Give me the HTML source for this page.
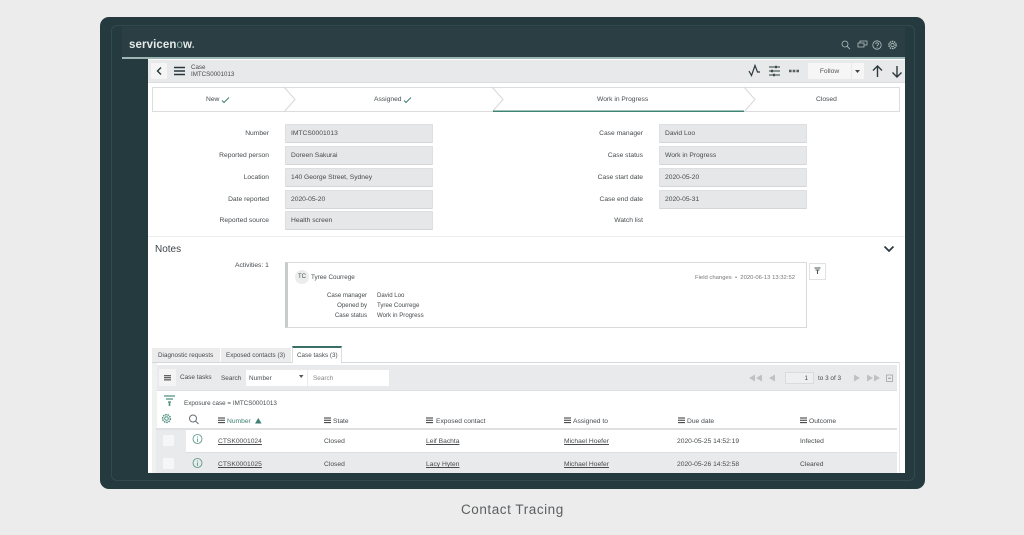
<!DOCTYPE html>
<html><head><meta charset="utf-8"><style>
html,body{margin:0;padding:0;width:1024px;height:535px;overflow:hidden;background:#ececec}
body{position:relative;font-family:"Liberation Sans",sans-serif;color:#4a4f52}
div,span.a,a{position:absolute}
.t{position:absolute;font-size:6.7px;line-height:10px;white-space:nowrap;color:#464b4e;filter:blur(.25px)}
.r{text-align:right}
.f{position:absolute;background:#e6e7e9;border:1px solid #dedfe1;border-bottom:1px solid #d4d5d7;box-sizing:border-box;height:19px;border-radius:1px;font-size:6.7px;line-height:18px;padding-left:5px;color:#464b4e;filter:blur(.2px)}
.u{text-decoration:underline}
svg{position:absolute;overflow:visible;filter:blur(.2px)}
</style></head><body>
<div style="left:100px;top:17px;width:825px;height:472px;background:#253a3e;border-radius:9px"></div>
<div style="left:111px;top:25px;width:804px;height:456px;border:1px solid #34494d;box-sizing:border-box;border-radius:6px"></div>
<div style="left:122px;top:27px;width:783px;height:30px;background:#2a3e43"></div>
<div style="left:122px;top:57px;width:783px;height:2px;background:#9db8b4"></div>
<div style="left:148px;top:59px;width:757px;height:414px;background:#fff"></div>
<div style="left:148px;top:60px;width:757px;height:23px;background:#e8e9eb;border-bottom:1px solid #dcdddf;box-sizing:border-box"></div>
<div class="t" style="left:129px;top:37px;font-size:11.5px;line-height:16px;font-weight:bold;color:#e4ebea;letter-spacing:.1px;filter:blur(.2px)">servicen<span style="color:#8fb5ad;font-weight:normal">o</span>w<span style="color:#8fb5ad">.</span></div>
<svg style="left:840px;top:38px" width="60" height="14" fill="none" stroke="#b4c2c2" stroke-width=".8">
<circle cx="5" cy="6" r="3"/><path d="M7 8.200l3 3"/>
<path d="M18 5h6v4h-6zM20 5V3h7v4h-3"/>
<circle cx="37" cy="7" r="4.200"/><path d="M35.700 6c.2-1.800 2.800-1.600 2.800 0 0 1-1.400 1-1.400 2.200M37 9.300v.6"/>
<circle cx="52.500" cy="7" r="1.700"/><circle cx="52.500" cy="7" r="3.600" stroke-dasharray="1.500 .8" stroke-width="1.400"/>
</svg>
<div style="left:151px;top:63px;width:16px;height:16px;background:#f5f5f6"></div>
<svg style="left:151px;top:63px" width="120" height="16" fill="none" stroke="#26363a">
<path d="M10 4.500L6.500 8l3.500 3.500" stroke-width="1.400"/>
<path d="M23 4.500h11M23 8h11M23 11.500h11" stroke-width="1.600"/></svg>
<div class="t" style="left:191px;top:64px;font-size:6.200px;line-height:7px">Case<br>IMTCS0001013</div>
<svg style="left:745px;top:62px" width="156" height="18" fill="none" stroke="#2c3a3d">
<path d="M4 9l2.500 4.500L10 3.500l2.500 6.500H15" stroke-width="1.200"/>
<path d="M24 5h11M24 9h11M24 13h11" stroke-width="1"/><path d="M31 3.700v2.600M27 7.700v2.600M29 11.700v2.600" stroke-width="1.600"/>
<path d="M44 9h11" stroke-width="2.400" stroke-dasharray="2.600 1.100" stroke="#555f62"/>
<path d="M132.500 15V4M128 8.500l4.500-4.500 4.500 4.500M152 4v11M147.500 10.500l4.500 4.500 4.500-4.500" stroke-width="1.400"/>
</svg>
<div style="left:808px;top:63px;width:43px;height:16px;background:#f6f6f7;font-size:6.700px;line-height:17px;text-align:center;color:#555">Follow</div>
<div style="left:852px;top:63px;width:12px;height:16px;background:#f6f6f7"></div>
<svg style="left:855px;top:70px" width="6" height="4"><path d="M0 0h5L2.500 3z" fill="#444"/></svg>

<div style="left:152px;top:87px;width:748px;height:25px;border:1px solid #dadcdd;box-sizing:border-box;background:#fff"></div>
<svg style="left:152px;top:87px" width="748" height="25" fill="none" stroke="#d6d8d9">
<path d="M132 0l11 12.500L132 25M340 0l11 12.500L340 25M592 0l11 12.500L592 25"/>
<path d="M341 24.200h251" stroke="#3f8576" stroke-width="1.500"/></svg>
<div class="t" style="left:206px;top:95px">New</div>
<svg style="left:221px;top:96px" width="10" height="8" fill="none" stroke="#3d7f72"><path d="M1 4.500l2 2L8 1.500"/></svg>
<div class="t" style="left:374px;top:95px">Assigned</div>
<svg style="left:403px;top:96px" width="10" height="8" fill="none" stroke="#3d7f72"><path d="M1 4.500l2 2L8 1.500"/></svg>
<div class="t" style="left:597px;top:95px">Work in Progress</div>
<div class="t" style="left:816px;top:95px">Closed</div>

<div class="t r" style="left:169px;width:100px;top:129px">Number</div>
<div class="t r" style="left:169px;width:100px;top:151px">Reported person</div>
<div class="t r" style="left:169px;width:100px;top:173px">Location</div>
<div class="t r" style="left:169px;width:100px;top:195px">Date reported</div>
<div class="t r" style="left:169px;width:100px;top:216px">Reported source</div>
<div class="f" style="left:285px;top:124px;width:148px">IMTCS0001013</div>
<div class="f" style="left:285px;top:146px;width:148px">Doreen Sakurai</div>
<div class="f" style="left:285px;top:168px;width:148px">140 George Street, Sydney</div>
<div class="f" style="left:285px;top:190px;width:148px">2020-05-20</div>
<div class="f" style="left:285px;top:211px;width:148px">Health screen</div>
<div class="t r" style="left:543px;width:100px;top:129px">Case manager</div>
<div class="t r" style="left:543px;width:100px;top:151px">Case status</div>
<div class="t r" style="left:543px;width:100px;top:173px">Case start date</div>
<div class="t r" style="left:543px;width:100px;top:195px">Case end date</div>
<div class="t r" style="left:543px;width:100px;top:216px">Watch list</div>
<div class="f" style="left:659px;top:124px;width:148px">David Loo</div>
<div class="f" style="left:659px;top:146px;width:148px">Work in Progress</div>
<div class="f" style="left:659px;top:168px;width:148px">2020-05-20</div>
<div class="f" style="left:659px;top:190px;width:148px">2020-05-31</div>

<div style="left:148px;top:236px;width:757px;height:1px;background:#eceded"></div>
<div class="t" style="left:155px;top:243px;font-size:10px;line-height:13px;color:#3f4649">Notes</div>
<svg style="left:883px;top:245px" width="12" height="8" fill="none" stroke="#2c3a3d" stroke-width="1.700"><path d="M1.500 1.500L6 6l4.500-4.500"/></svg>
<div class="t" style="left:235px;top:261px">Activities: 1</div>
<div style="left:285px;top:262px;width:522px;height:66px;background:#fff;border:1px solid #d8dadb;border-left:3px solid #c9cccd;box-sizing:border-box"></div>
<div style="left:295px;top:270px;width:14px;height:14px;border-radius:7px;background:#eceded;font-size:6px;line-height:14px;text-align:center">TC</div>
<div class="t" style="left:311px;top:273px;font-size:6.300px">Tyree Courrege</div>
<div class="t r" style="left:693px;top:273px;width:102px;font-size:5.900px;color:#777">Field changes &nbsp;•&nbsp; 2020-06-13 13:32:52</div>
<div class="t r" style="left:317px;top:291px;width:50px;font-size:6.100px">Case manager</div>
<div class="t" style="left:377px;top:291px;font-size:6.100px">David Loo</div>
<div class="t r" style="left:317px;top:301px;width:50px;font-size:6.100px">Opened by</div>
<div class="t" style="left:377px;top:301px;font-size:6.100px">Tyree Courrege</div>
<div class="t r" style="left:317px;top:311px;width:50px;font-size:6.100px">Case status</div>
<div class="t" style="left:377px;top:311px;font-size:6.100px">Work in Progress</div>
<div style="left:809px;top:263px;width:17px;height:17px;background:#fff;border:1px solid #e0e1e2;box-sizing:border-box"></div>
<svg style="left:814px;top:267px" width="8" height="9" fill="none" stroke="#4a5558"><path d="M.5 1h6M1.500 3h4M3.500 3v4" stroke-width="1.100"/></svg>

<div style="left:152px;top:348px;width:68px;height:15px;background:#ececed"></div>
<div style="left:221px;top:348px;width:70px;height:15px;background:#ececed"></div>
<div style="left:292px;top:346px;width:50px;height:17px;background:#fff;border:1px solid #dcdddf;border-top:2px solid #3a6f66;border-bottom:0;box-sizing:border-box"></div>
<div class="t" style="left:158px;top:351px;font-size:6.300px">Diagnostic requests</div>
<div class="t" style="left:226px;top:351px;font-size:6.300px">Exposed contacts (3)</div>
<div class="t" style="left:297px;top:351px;font-size:6.300px">Case tasks (3)</div>
<div style="left:152px;top:362px;width:140px;height:1px;background:#d5d7d8"></div>
<div style="left:342px;top:362px;width:558px;height:1px;background:#d5d7d8"></div>
<div style="left:899px;top:362px;width:1px;height:111px;background:#e5e6e7"></div>
<div style="left:152px;top:363px;width:5px;height:110px;background:#f0f1f1"></div>
<div style="left:157px;top:365px;width:740px;height:26px;background:#e9eaeb;border-bottom:1px solid #dfe0e1;box-sizing:border-box"></div>
<div style="left:159px;top:369px;width:17px;height:17px;background:#f4f4f5"></div>
<svg style="left:164px;top:375px" width="8" height="6" fill="none" stroke="#333"><path d="M0 .7h7M0 2.800h7M0 4.900h7" stroke-width="1"/></svg>
<div class="t" style="left:180px;top:373px;font-size:6.400px">Case tasks</div>
<div class="t" style="left:221px;top:374px;font-size:6.400px">Search</div>
<div style="left:246px;top:370px;width:61px;height:16px;background:#fff;font-size:6.400px;line-height:17px;padding-left:3px;box-sizing:border-box">Number</div>
<svg style="left:299px;top:375px" width="5" height="4"><path d="M0 0h4.500L2.200 3z" fill="#555"/></svg>
<div style="left:308px;top:370px;width:81px;height:16px;background:#fff;font-size:6.400px;line-height:17px;padding-left:5px;box-sizing:border-box;color:#888">Search</div>
<svg style="left:747px;top:373px" width="150" height="11" fill="#bfc2c4">
<path d="M8 1.500v7L2 5zM15 1.500v7L9 5zM28 1.500v7L22 5zM107 1.500v7l6-3.500zM120 1.500v7l6-3.500zM127 1.500v7l6-3.500z"/>
<rect x="139.500" y="2" width="6" height="6.500" fill="none" stroke="#999" stroke-width=".7"/><path d="M141 5.200h3" stroke="#777" stroke-width=".7"/></svg>
<div style="left:785px;top:372px;width:29px;height:12px;background:#eeeff0;border:1px solid #dadbdc;box-sizing:border-box;font-size:6.400px;line-height:11px;text-align:right;padding-right:5px">1</div>
<div class="t" style="left:818px;top:374px;font-size:6.400px">to 3 of 3</div>
<svg style="left:163px;top:395px" width="13" height="13" fill="none" stroke="#4f8f80"><path d="M1 1h11M3 4h7M5 7h3" stroke-width="1.200"/><path d="M6.500 7v4" stroke-width="1.600"/></svg>
<div class="t" style="left:184px;top:399px;font-size:6.300px">Exposure case = IMTCS0001013</div>
<svg style="left:161px;top:413px" width="11" height="11" fill="none" stroke="#4f8f80"><circle cx="5.500" cy="5.500" r="1.800"/><circle cx="5.500" cy="5.500" r="3.900" stroke-dasharray="1.600 .8" stroke-width="1.500"/></svg>
<svg style="left:188px;top:414px" width="12" height="11" fill="none" stroke="#667074"><circle cx="5" cy="4.500" r="3.500"/><path d="M7.500 7l3 3"/></svg>
<svg style="left:218px;top:417px" width="8" height="7" fill="none" stroke="#333"><path d="M0 1h7M0 3.300h7M0 5.600h7" stroke-width="1"/></svg>
<div class="t" style="left:227px;top:417px;color:#3f8273">Number</div>
<svg style="left:255px;top:418px" width="7" height="6"><path d="M0 5.500L3.300 0l3.300 5.500z" fill="#3f8273"/></svg>
<svg style="left:324px;top:417px" width="8" height="7" fill="none" stroke="#333"><path d="M0 1h7M0 3.300h7M0 5.600h7" stroke-width="1"/></svg>
<div class="t" style="left:333px;top:417px">State</div>
<svg style="left:426px;top:417px" width="8" height="7" fill="none" stroke="#333"><path d="M0 1h7M0 3.300h7M0 5.600h7" stroke-width="1"/></svg>
<div class="t" style="left:436px;top:417px">Exposed contact</div>
<svg style="left:564px;top:417px" width="8" height="7" fill="none" stroke="#333"><path d="M0 1h7M0 3.300h7M0 5.600h7" stroke-width="1"/></svg>
<div class="t" style="left:573px;top:417px">Assigned to</div>
<svg style="left:678px;top:417px" width="8" height="7" fill="none" stroke="#333"><path d="M0 1h7M0 3.300h7M0 5.600h7" stroke-width="1"/></svg>
<div class="t" style="left:687px;top:417px">Due date</div>
<svg style="left:800px;top:417px" width="8" height="7" fill="none" stroke="#333"><path d="M0 1h7M0 3.300h7M0 5.600h7" stroke-width="1"/></svg>
<div class="t" style="left:809px;top:417px">Outcome</div>

<div style="left:156px;top:428px;width:741px;height:2px;background:#dfe0e1"></div>
<div style="left:156px;top:430px;width:30px;height:43px;background:#e9eaeb"></div>
<div style="left:186px;top:452px;width:711px;height:21px;background:#e9eaeb;border-top:1px solid #dcdddf;box-sizing:border-box"></div>
<div style="left:163px;top:435px;width:11px;height:11px;background:#f6f6f7"></div>
<div style="left:163px;top:458px;width:11px;height:11px;background:#f6f6f7"></div>
<svg style="left:192px;top:434px" width="11" height="34" fill="none" stroke="#4f8f80" stroke-width=".8"><circle cx="5.500" cy="5" r="4.500"/><circle cx="5.500" cy="29" r="4.500"/><path d="M5.500 4.500V8M5.500 2.500v1M5.500 28.500V32M5.500 26.500v1"/></svg>
<div class="t u" style="left:218px;top:437px">CTSK0001024</div>
<div class="t" style="left:324px;top:437px">Closed</div>
<div class="t u" style="left:426px;top:437px">Leif Bachta</div>
<div class="t u" style="left:564px;top:437px">Michael Hoefer</div>
<div class="t" style="left:677px;top:437px">2020-05-25 14:52:19</div>
<div class="t" style="left:800px;top:437px">Infected</div>
<div class="t u" style="left:218px;top:460px">CTSK0001025</div>
<div class="t" style="left:324px;top:460px">Closed</div>
<div class="t u" style="left:426px;top:460px">Lacy Hyten</div>
<div class="t u" style="left:564px;top:460px">Michael Hoefer</div>
<div class="t" style="left:677px;top:460px">2020-05-26 14:52:58</div>
<div class="t" style="left:800px;top:460px">Cleared</div>

<div class="t" style="left:461px;top:501px;font-size:13.500px;line-height:17px;color:#5c6062;letter-spacing:.55px">Contact Tracing</div>
</body></html>
